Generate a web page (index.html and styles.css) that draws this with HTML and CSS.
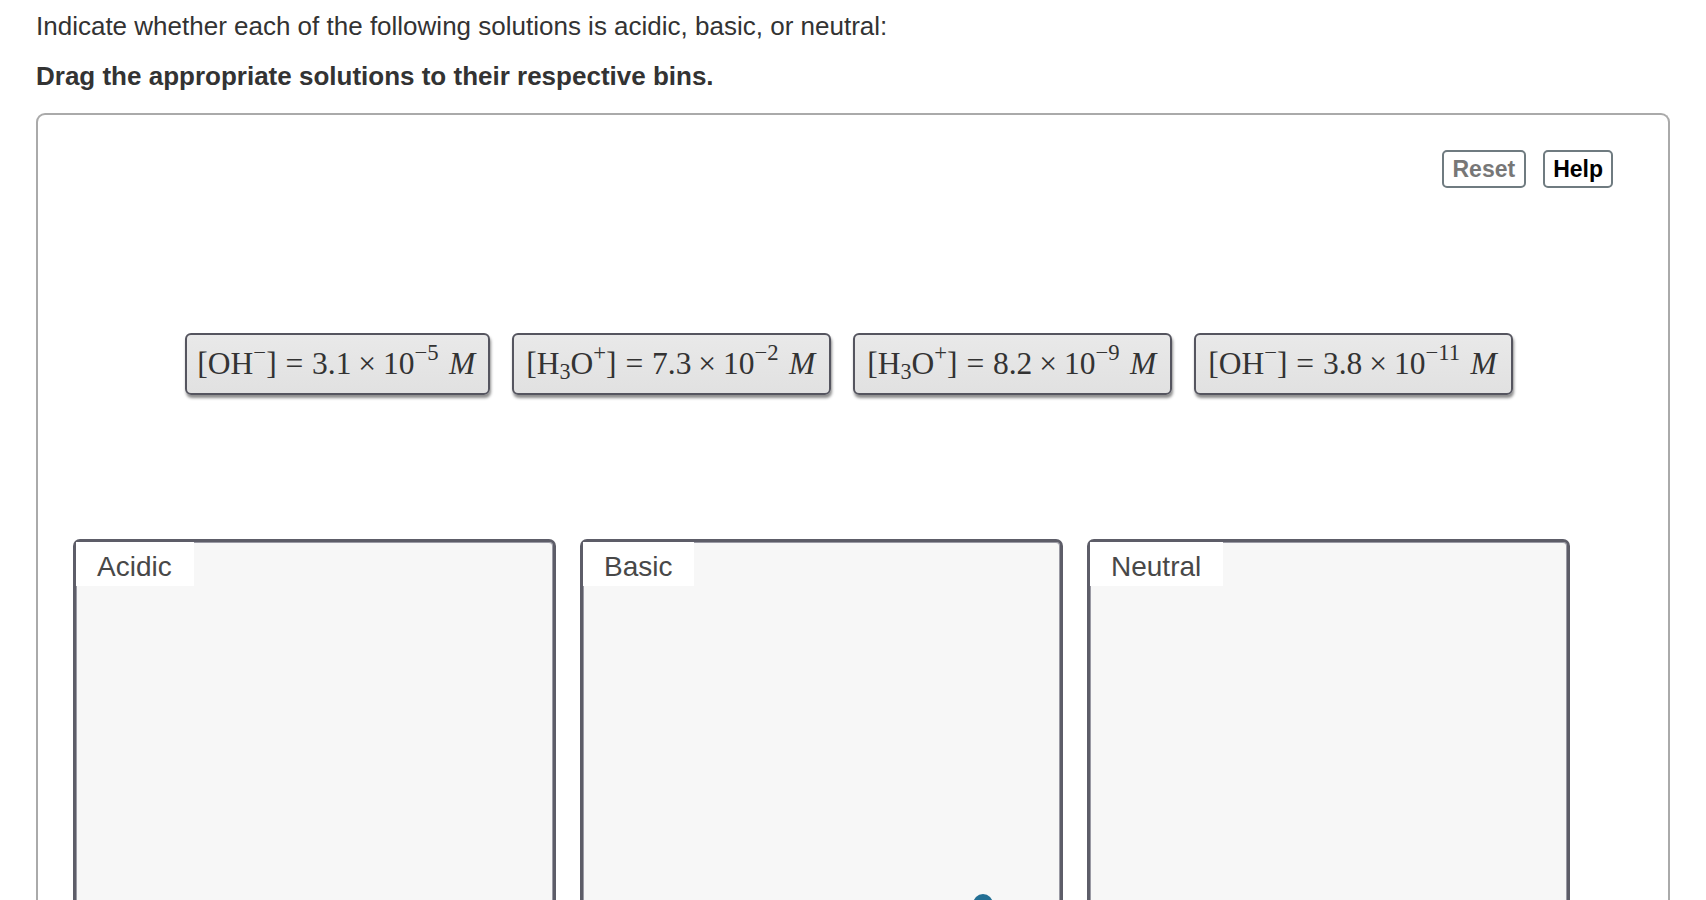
FILE: index.html
```html
<!DOCTYPE html>
<html lang="en">
<head>
<meta charset="utf-8">
<title>Acidic, basic, or neutral</title>
<link rel="stylesheet" href="styles.css">
</head>
<body>
<div class="page">
  <p class="prompt">Indicate whether each of the following solutions is acidic, basic, or neutral:</p>
  <p class="instruction">Drag the appropriate solutions to their respective bins.</p>
  <div class="panel">
    <div class="toolbar">
      <button class="btn btn-reset">Reset</button>
      <button class="btn btn-help">Help</button>
    </div>
    <div class="tiles">
      <div class="tile"><span class="math">[OH<sup>−</sup>]<span class="rel">=</span>3.1<span class="op">×</span>10<sup>−5</sup><i class="unit">M</i></span></div>
      <div class="tile tile-wide"><span class="math">[H<sub>3</sub>O<sup>+</sup>]<span class="rel">=</span>7.3<span class="op">×</span>10<sup>−2</sup><i class="unit">M</i></span></div>
      <div class="tile tile-wide"><span class="math">[H<sub>3</sub>O<sup>+</sup>]<span class="rel">=</span>8.2<span class="op">×</span>10<sup>−9</sup><i class="unit">M</i></span></div>
      <div class="tile tile-wide"><span class="math">[OH<sup>−</sup>]<span class="rel">=</span>3.8<span class="op">×</span>10<sup>−11</sup><i class="unit">M</i></span></div>
    </div>
    <div class="bins">
      <div class="bin"><div class="bin-label">Acidic</div></div>
      <div class="bin"><div class="bin-label">Basic</div></div>
      <div class="bin"><div class="bin-label">Neutral</div></div>
    </div>
  </div>
</div>
<div class="scroll-dot"></div>
</body>
</html>
```
FILE: styles.css
```css
html, body {
  margin: 0;
  padding: 0;
  background: #ffffff;
}
body {
  font-family: "Liberation Sans", Arial, Helvetica, sans-serif;
  color: #333333;
  overflow: hidden;
}
.page {
  padding: 11px 36px 0 36px;
}
.prompt {
  margin: 0;
  font-size: 26px;
  line-height: 30px;
  color: #333333;
}
.instruction {
  margin: 20px 0 0 0;
  font-size: 26px;
  line-height: 30px;
  font-weight: bold;
  color: #333333;
}
.panel {
  margin-top: 22px;
  border: 2px solid #aaaaaa;
  border-bottom: none;
  border-radius: 9px 9px 0 0;
  padding: 35px 55px 0 35px;
  height: 900px;
  box-sizing: border-box;
}
.toolbar {
  display: flex;
  justify-content: flex-end;
  gap: 17px;
}
.btn {
  font-family: "Liberation Sans", Arial, Helvetica, sans-serif;
  font-size: 23px;
  font-weight: bold;
  height: 38px;
  padding: 0 8px;
  border: 2px solid #6f7b80;
  border-radius: 5px;
  background: #ffffff;
  line-height: 34px;
}
.btn-reset {
  color: #777777;
  padding: 0 9px;
}
.btn-help {
  color: #000000;
}
.tiles {
  display: flex;
  justify-content: center;
  gap: 22px;
  margin-top: 145px;
  padding-left: 12px;
}
.tile {
  height: 62px;
  box-sizing: border-box;
  border: 2px solid #55555f;
  border-radius: 6px;
  background: linear-gradient(#e9e9e9, #e1e1e1);
  box-shadow: 1px 3px 3px rgba(0, 0, 0, 0.45);
  padding: 0 13px 0 10px;
  display: flex;
  align-items: center;
}
.tile-wide {
  padding: 0 14px 0 12px;
}
.math {
  font-family: "Liberation Serif", "Times New Roman", serif;
  font-size: 31.5px;
  color: #333333;
  white-space: nowrap;
}
.math sup {
  font-size: 0.72em;
  vertical-align: 0.62em;
  line-height: 0;
}
.math sub {
  font-size: 0.7em;
  vertical-align: -0.22em;
  line-height: 0;
}
.rel {
  margin: 0 0.28em;
}
.op {
  margin: 0 0.22em;
}
.unit {
  margin-left: 0.33em;
}
.bins {
  display: flex;
  gap: 24px;
  margin-top: 144px;
}
.bin {
  width: 483px;
  height: 420px;
  box-sizing: border-box;
  border: 3px solid #5d5d68;
  border-bottom: none;
  border-radius: 7px 7px 0 0;
  background: #f7f7f7;
  box-shadow: inset 0 0 0 1px #9a9aa4;
}
.bin-label {
  display: inline-block;
  background: #ffffff;
  font-size: 28px;
  line-height: 41px;
  height: 44px;
  box-sizing: border-box;
  padding: 4px 22px 0 21px;
  color: #484848;
}
.scroll-dot {
  position: fixed;
  left: 973px;
  bottom: -14px;
  width: 20px;
  height: 20px;
  border-radius: 50%;
  background: #236f94;
}
```
